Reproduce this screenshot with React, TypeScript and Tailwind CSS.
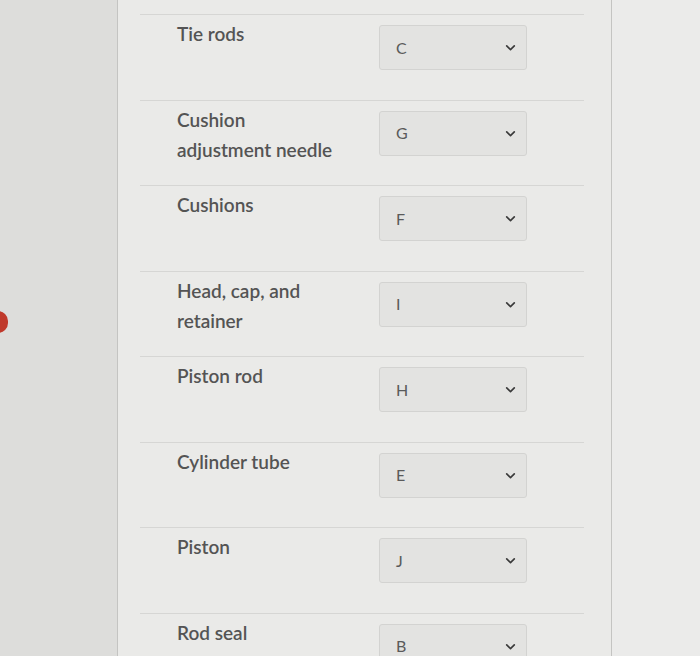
import React from "react";

type MatchRowProps = {
  label: string[];
  answer: string;
};

const rows: MatchRowProps[] = [
  { label: ["Tie rods"], answer: "C" },
  { label: ["Cushion", "adjustment needle"], answer: "G" },
  { label: ["Cushions"], answer: "F" },
  { label: ["Head, cap, and", "retainer"], answer: "I" },
  { label: ["Piston rod"], answer: "H" },
  { label: ["Cylinder tube"], answer: "E" },
  { label: ["Piston"], answer: "J" },
  { label: ["Rod seal"], answer: "B" },
];

const MatchRow: React.FC<MatchRowProps> = ({ label, answer }) => {
  return (
    <div className="flex h-[85.5px] shrink-0 border-t border-[#d6d6d4]">
      {/* Term */}
      <div className="w-[239px] shrink-0 pl-[37px] pt-[4px] text-[19px] leading-[30px] font-semibold text-[#545454]">
        {label.map((line) => (
          <div key={line}>{line}</div>
        ))}
      </div>

      {/* Dropdown */}
      <div className="pt-[10px]">
        <div className="flex h-[45px] w-[148px] items-center justify-between rounded-[3px] border border-[#d3d3d1] bg-[#e3e3e1] pl-[16px] pr-[9px]">
          <span className="text-[16px] text-[#5a5a5a]">{answer}</span>
          <svg
            className="h-[13px] w-[13px] text-[#3a3a3a]"
            fill="none"
            stroke="currentColor"
            strokeWidth={3}
            viewBox="0 0 24 24"
          >
            <path strokeLinecap="round" strokeLinejoin="round" d="M5 9l7 7 7-7" />
          </svg>
        </div>
      </div>
    </div>
  );
};

export default function App() {
  return (
    <div
      className="relative flex h-[656px] w-[700px] overflow-hidden bg-[#e9e9e7]"
      style={{ fontFamily: "Lato, 'Open Sans', sans-serif" }}
    >
      {/* Left margin of the page */}
      <div className="w-[117px] shrink-0 bg-[#dddddb]" />

      {/* Question panel */}
      <div className="flex w-[495px] shrink-0 flex-col border-l border-r border-[#c4c4c2] bg-[#eaeae8] pl-[22px] pr-[27px] pt-[14px]">
        {rows.map((row) => (
          <MatchRow key={row.answer} {...row} />
        ))}
      </div>

      {/* Right side */}
      <div className="flex-1 bg-[#ebebea]" />

      {/* Red marker at the left edge */}
      <div className="absolute left-[-12px] top-[311px] h-[22px] w-[20px] rounded-full bg-[#c0392b]" />
    </div>
  );
}
